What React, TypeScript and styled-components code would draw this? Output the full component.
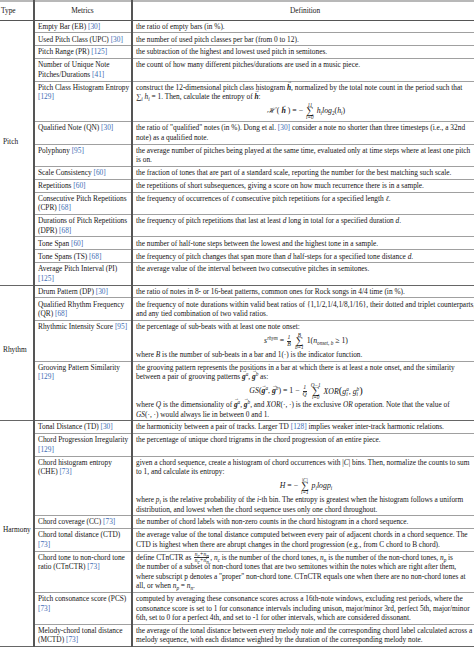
import React from 'react'
import styled, { createGlobalStyle } from 'styled-components'

const GlobalStyle = createGlobalStyle`
  html, body { margin: 0; padding: 0; background: #fff; }
  body { width: 474px; height: 649px; overflow: hidden; }
`

const Table = styled.table`
  width: 478px;
  border-collapse: collapse;
  table-layout: fixed;
  font-family: 'Liberation Serif', 'DejaVu Serif', serif;
  font-size: 7.35px;
  line-height: 9.5px;
  color: #151515;
  border-top: 2px solid #b8b8b8;
`

const HeadCell = styled.th<{ $align?: 'left' | 'center'; $divided?: boolean }>`
  font-weight: normal;
  text-align: ${(p) => p.$align ?? 'center'};
  padding: 4px 2px 4px 1px;
  border-bottom: 1.5px solid #555;
  ${(p) => (p.$divided ? 'border-left: 2px solid #555; border-right: 2px solid #555;' : '')}
`

const TypeCell = styled.td<{ $offset: number }>`
  vertical-align: top;
  padding: ${(p) => p.$offset}px 0 0 3px;
  border-bottom: 1px solid #666;
`

const MetricCell = styled.td<{ $last?: boolean }>`
  vertical-align: top;
  white-space: nowrap;
  overflow: hidden;
  padding: 1.2px 1px 1.2px 3px;
  border-left: 2px solid #555;
  border-right: 2px solid #555;
  border-bottom: 1px solid ${(p) => (p.$last ? '#666' : '#a0a0a0')};
`

const DefCell = styled.td<{ $last?: boolean }>`
  vertical-align: top;
  white-space: nowrap;
  padding: 1.2px 2px 1.2px 3px;
  border-bottom: 1px solid ${(p) => (p.$last ? '#666' : '#a0a0a0')};
`

const Cite = styled.span`
  color: #3d6cb4;
`

const I = styled.i`
  font-style: italic;
`

const Sub = styled.sub`
  font-size: 5.2px;
  line-height: 0;
  vertical-align: -1.5px;
`

const Sup = styled.sup`
  font-size: 5.2px;
  line-height: 0;
  vertical-align: 3px;
`

const Formula = styled.div`
  display: flex;
  justify-content: center;
  align-items: center;
  gap: 2px;
  font-size: 7.8px;
  line-height: 8px;
  padding-top: 1px;
`

const SumBox = styled.span`
  display: inline-flex;
  flex-direction: column;
  align-items: center;
  line-height: 0.9;
  margin: 0 1px;
`

const Limit = styled.span`
  font-size: 5.2px;
  font-style: italic;
`

const Sigma = styled.span`
  font-size: 10.5px;
  line-height: 8px;
`

const FracBox = styled.span`
  display: inline-flex;
  flex-direction: column;
  align-items: center;
  vertical-align: middle;
  line-height: 1;
  font-size: 5.8px;
  font-style: italic;
  margin: 0 1px;
`

const InlineFracBox = styled(FracBox)`
  margin: -3px 1px -2px;
  font-size: 5.4px;
`

const FracTop = styled.span`
  border-bottom: 0.6px solid #333;
  padding: 0 0.5px;
`

const VecBox = styled.span`
  position: relative;
  display: inline-block;
  font-style: italic;
  font-weight: bold;
`

const VecArrow = styled.span`
  position: absolute;
  left: 0;
  right: 0;
  top: -4px;
  font-size: 5px;
  font-weight: normal;
  font-style: normal;
  text-align: center;
  line-height: 1;
`

const StackBox = styled.span`
  display: inline-flex;
  flex-direction: column;
  line-height: 1;
  font-size: 5.2px;
  font-style: italic;
  vertical-align: middle;
`

const BigParen = styled.span`
  font-size: 10.5px;
  line-height: 1;
`

const Vec = ({ children }: { children: React.ReactNode }) => (
  <VecBox>
    {children}
    <VecArrow>→</VecArrow>
  </VecBox>
)

const Sum = ({ top, bottom }: { top: string; bottom: string }) => (
  <SumBox>
    <Limit>{top}</Limit>
    <Sigma>∑</Sigma>
    <Limit>{bottom}</Limit>
  </SumBox>
)

const Frac = ({ top, bottom }: { top: React.ReactNode; bottom: React.ReactNode }) => (
  <FracBox>
    <FracTop>{top}</FracTop>
    <span>{bottom}</span>
  </FracBox>
)

const InlineFrac = ({ top, bottom }: { top: React.ReactNode; bottom: React.ReactNode }) => (
  <InlineFracBox>
    <FracTop>{top}</FracTop>
    <span>{bottom}</span>
  </InlineFracBox>
)

const SubSup = ({ sup, sub }: { sup: string; sub: string }) => (
  <StackBox>
    <span>{sup}</span>
    <span>{sub}</span>
  </StackBox>
)

type Row = { metric: React.ReactNode; def: React.ReactNode }
type Group = { label: string; offset: number; rows: Row[] }

const groups: Group[] = [
  {
    label: 'Pitch',
    offset: 116,
    rows: [
      { metric: <>Empty Bar (EB) <Cite>[30]</Cite></>, def: <>the ratio of empty bars (in %).</> },
      {
        metric: <>Used Pitch Class (UPC) <Cite>[30]</Cite></>,
        def: <>the number of used pitch classes per bar (from 0 to 12).</>,
      },
      {
        metric: <>Pitch Range (PR) <Cite>[125]</Cite></>,
        def: <>the subtraction of the highest and lowest used pitch in semitones.</>,
      },
      {
        metric: <>Number of Unique Note<br />Pitches/Durations <Cite>[41]</Cite></>,
        def: <>the count of how many different pitches/durations are used in a music piece.</>,
      },
      {
        metric: <>Pitch Class Histogram Entropy<br /><Cite>[129]</Cite></>,
        def: (
          <>
            construct the 12-dimensional pitch class histogram <Vec>h</Vec>, normalized by the total note count in the period such that
            <br />
            ∑<Sub><I>i</I></Sub> <I>h</I><Sub><I>i</I></Sub> = 1. Then, calculate the entropy of <Vec>h</Vec>:
            <Formula>
              <I>ℋ</I>(<Vec>h</Vec>) = −<Sum top="11" bottom="i=0" />
              <span><I>h</I><Sub><I>i</I></Sub><I>log</I><Sub>2</Sub>(<I>h</I><Sub><I>i</I></Sub>)</span>
            </Formula>
          </>
        ),
      },
      {
        metric: <>Qualified Note (QN) <Cite>[30]</Cite></>,
        def: (
          <>
            the ratio of "qualified" notes (in %). Dong et al. <Cite>[30]</Cite> consider a note no shorter than three timesteps (i.e., a 32nd
            <br />
            note) as a qualified note.
          </>
        ),
      },
      {
        metric: <>Polyphony <Cite>[95]</Cite></>,
        def: (
          <>
            the average number of pitches being played at the same time, evaluated only at time steps where at least one pitch
            <br />
            is on.
          </>
        ),
      },
      {
        metric: <>Scale Consistency <Cite>[60]</Cite></>,
        def: <>the fraction of tones that are part of a standard scale, reporting the number for the best matching such scale.</>,
      },
      {
        metric: <>Repetitions <Cite>[60]</Cite></>,
        def: <>the repetitions of short subsequences, giving a score on how much recurrence there is in a sample.</>,
      },
      {
        metric: <>Consecutive Pitch Repetitions<br />(CPR) <Cite>[68]</Cite></>,
        def: <>the frequency of occurrences of <I>ℓ</I> consecutive pitch repetitions for a specified length <I>ℓ</I>.</>,
      },
      {
        metric: <>Durations of Pitch Repetitions<br />(DPR) <Cite>[68]</Cite></>,
        def: <>the frequency of pitch repetitions that last at least <I>d</I> long in total for a specified duration <I>d</I>.</>,
      },
      {
        metric: <>Tone Span <Cite>[60]</Cite></>,
        def: <>the number of half-tone steps between the lowest and the highest tone in a sample.</>,
      },
      {
        metric: <>Tone Spans (TS) <Cite>[68]</Cite></>,
        def: <>the frequency of pitch changes that span more than <I>d</I> half-steps for a specified tone distance <I>d</I>.</>,
      },
      {
        metric: <>Average Pitch Interval (PI)<br /><Cite>[125]</Cite></>,
        def: <>the average value of the interval between two consecutive pitches in semitones.</>,
      },
    ],
  },
  {
    label: 'Rhythm',
    offset: 59,
    rows: [
      {
        metric: <>Drum Pattern (DP) <Cite>[30]</Cite></>,
        def: <>the ratio of notes in 8- or 16-beat patterns, common ones for Rock songs in 4/4 time (in %).</>,
      },
      {
        metric: <>Qualified Rhythm Frequency<br />(QR) <Cite>[68]</Cite></>,
        def: (
          <>
            the frequency of note durations within valid beat ratios of {'{'}1,1/2,1/4,1/8,1/16{'}'}, their dotted and triplet counterparts,
            <br />
            and any tied combination of two valid ratios.
          </>
        ),
      },
      {
        metric: <>Rhythmic Intensity Score <Cite>[95]</Cite></>,
        def: (
          <>
            the percentage of sub-beats with at least one note onset:
            <Formula>
              <span><I>s</I><Sup><I>rhym</I></Sup> =</span>
              <Frac top="1" bottom="B" />
              <Sum top="B" bottom="b=1" />
              <span>1(<I>n</I><Sub><I>onset</I>, <I>b</I></Sub> ≥ 1)</span>
            </Formula>
            where <I>B</I> is the number of sub-beats in a bar and 1(·) is the indicator function.
          </>
        ),
      },
      {
        metric: <>Grooving Pattern Similarity<br /><Cite>[129]</Cite></>,
        def: (
          <>
            the grooving pattern represents the positions in a bar at which there is at least a note onset, and the similarity
            <br />
            between a pair of grooving patterns <Vec>g</Vec><Sup><I>a</I></Sup>, <Vec>g</Vec><Sup><I>b</I></Sup> as:
            <Formula>
              <span><I>GS</I>(<Vec>g</Vec><Sup><I>a</I></Sup>, <Vec>g</Vec><Sup><I>b</I></Sup>) = 1 −</span>
              <Frac top="1" bottom="Q" />
              <Sum top="Q−1" bottom="i=0" />
              <span>
                <I>XOR</I>
                <BigParen>(</BigParen>
                <I>g</I><SubSup sup="a" sub="i" />, <I>g</I><SubSup sup="b" sub="i" />
                <BigParen>)</BigParen>
              </span>
            </Formula>
            where <I>Q</I> is the dimensionality of <Vec>g</Vec><Sup><I>a</I></Sup>, <Vec>g</Vec><Sup><I>b</I></Sup>, and <I>XOR</I>(·, ·) is the exclusive <I>OR</I> operation. Note that the value of
            <br />
            <I>GS</I>(·, ·) would always lie in between 0 and 1.
          </>
        ),
      },
    ],
  },
  {
    label: 'Harmony',
    offset: 104,
    rows: [
      {
        metric: <>Tonal Distance (TD) <Cite>[30]</Cite></>,
        def: <>the harmonicity between a pair of tracks. Larger TD <Cite>[128]</Cite> implies weaker inter-track harmonic relations.</>,
      },
      {
        metric: <>Chord Progression Irregularity<br /><Cite>[129]</Cite></>,
        def: <>the percentage of unique chord trigrams in the chord progression of an entire piece.</>,
      },
      {
        metric: <>Chord histogram entropy<br />(CHE) <Cite>[73]</Cite></>,
        def: (
          <>
            given a chord sequence, create a histogram of chord occurrences with |<I>C</I>| bins. Then, normalize the counts to sum
            <br />
            to 1, and calculate its entropy:
            <Formula>
              <span><I>H</I> = −</span>
              <Sum top="|C|" bottom="i=1" />
              <span><I>p</I><Sub><I>i</I></Sub><I>logp</I><Sub><I>i</I></Sub></span>
            </Formula>
            where <I>p</I><Sub><I>i</I></Sub> is the relative probability of the <I>i</I>-th bin. The entropy is greatest when the histogram follows a uniform
            <br />
            distribution, and lowest when the chord sequence uses only one chord throughout.
          </>
        ),
      },
      {
        metric: <>Chord coverage (CC) <Cite>[73]</Cite></>,
        def: <>the number of chord labels with non-zero counts in the chord histogram in a chord sequence.</>,
      },
      {
        metric: <>Chord tonal distance (CTD)<br /><Cite>[73]</Cite></>,
        def: (
          <>
            the average value of the tonal distance computed between every pair of adjacent chords in a chord sequence. The
            <br />
            CTD is highest when there are abrupt changes in the chord progression (e.g., from C chord to B chord).
          </>
        ),
      },
      {
        metric: <>Chord tone to non-chord tone<br />ratio (CTnCTR) <Cite>[73]</Cite></>,
        def: (
          <>
            define CTnCTR as{' '}
            <InlineFrac
              top={<>n<Sub>c</Sub>+n<Sub>p</Sub></>}
              bottom={<>n<Sub>c</Sub>+n<Sub>n</Sub></>}
            />
            , <I>n</I><Sub><I>c</I></Sub> is the number of the chord tones, <I>n</I><Sub><I>n</I></Sub> is the number of the non-chord tones, <I>n</I><Sub><I>p</I></Sub> is
            <br />
            the number of a subset of non-chord tones that are two semitones within the notes which are right after them,
            <br />
            where subscript p denotes a "proper" non-chord tone. CTnCTR equals one when there are no non-chord tones at
            <br />
            all, or when <I>n</I><Sub><I>p</I></Sub> = <I>n</I><Sub><I>n</I></Sub>.
          </>
        ),
      },
      {
        metric: <>Pitch consonance score (PCS)<br /><Cite>[73]</Cite></>,
        def: (
          <>
            computed by averaging these consonance scores across a 16th-note windows, excluding rest periods, where the
            <br />
            consonance score is set to 1 for consonance intervals including unison, major/minor 3rd, perfect 5th, major/minor
            <br />
            6th, set to 0 for a perfect 4th, and set to -1 for other intervals, which are considered dissonant.
          </>
        ),
      },
      {
        metric: <>Melody-chord tonal distance<br />(MCTD) <Cite>[73]</Cite></>,
        def: (
          <>
            the average of the tonal distance between every melody note and the corresponding chord label calculated across a
            <br />
            melody sequence, with each distance weighted by the duration of the corresponding melody note.
          </>
        ),
      },
    ],
  },
]

export default function App() {
  return (
    <>
      <GlobalStyle />
      <Table>
        <colgroup>
          <col style={{ width: 34 }} />
          <col style={{ width: 98 }} />
          <col style={{ width: 346 }} />
        </colgroup>
        <thead>
          <tr>
            <HeadCell $align="left">Type</HeadCell>
            <HeadCell $divided>Metrics</HeadCell>
            <HeadCell>Definition</HeadCell>
          </tr>
        </thead>
        <tbody>
          {groups.map((group) =>
            group.rows.map((row, i) => {
              const last = i === group.rows.length - 1
              return (
                <tr key={`${group.label}-${i}`}>
                  {i === 0 && (
                    <TypeCell rowSpan={group.rows.length} $offset={group.offset}>
                      {group.label}
                    </TypeCell>
                  )}
                  <MetricCell $last={last}>{row.metric}</MetricCell>
                  <DefCell $last={last}>{row.def}</DefCell>
                </tr>
              )
            }),
          )}
        </tbody>
      </Table>
    </>
  )
}
